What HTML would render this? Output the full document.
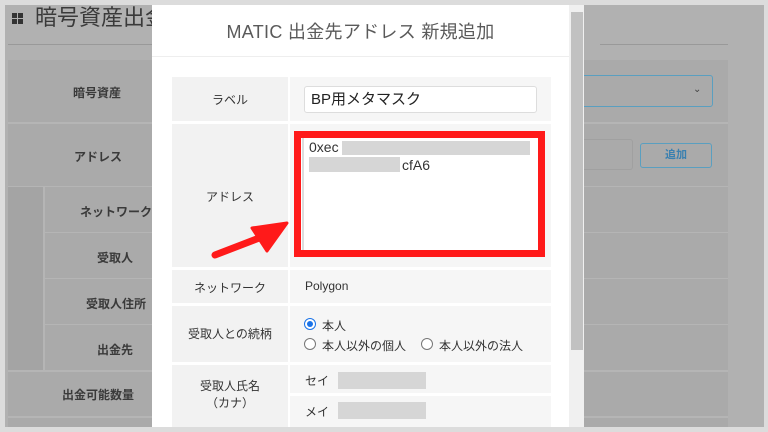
<!DOCTYPE html>
<html><head><meta charset="utf-8"><style>
*{margin:0;padding:0;box-sizing:border-box}
body{width:768px;height:432px;overflow:hidden;background:#dcdcdc;font-family:"Liberation Sans","Noto Sans CJK JP",sans-serif;position:relative}
.a{position:absolute}
.lt{font-size:12px;color:#333;text-align:center}
.g{position:absolute;width:5px;height:5px;background:#333}
</style></head><body>
<div class="a" style="left:5px;top:5px;width:759px;height:422px;background:#b1b1b1"></div>
<div class="g" style="left:12px;top:13px"></div><div class="g" style="left:18px;top:13px"></div>
<div class="g" style="left:12px;top:19px"></div><div class="g" style="left:18px;top:19px"></div>
<div class="a" style="left:35px;top:5px;font-size:22px;color:#3a3a3a;line-height:26px">暗号資産出金</div>
<div class="a" style="left:8px;top:44px;width:337px;height:1px;background:#999"></div>
<div class="a" style="left:600px;top:44px;width:128px;height:1px;background:#999"></div>
<div class="a" style="left:8px;top:60px;width:720px;height:367px;background:#aaaaaa"></div>
<div class="a" style="left:8px;top:122px;width:720px;height:2px;background:#b5b5b5"></div>
<div class="a" style="left:8px;top:186px;width:720px;height:1px;background:#b5b5b5"></div>
<div class="a" style="left:8px;top:370px;width:720px;height:2px;background:#b5b5b5"></div>
<div class="a" style="left:8px;top:416px;width:720px;height:2px;background:#b5b5b5"></div>
<div class="a" style="left:43px;top:187px;width:2px;height:183px;background:#b5b5b5"></div>
<div class="a" style="left:8px;top:187px;width:35px;height:183px;background:#a4a4a4"></div>
<div class="a" style="left:45px;top:232px;width:683px;height:1px;background:#b5b5b5"></div>
<div class="a" style="left:45px;top:278px;width:683px;height:1px;background:#b5b5b5"></div>
<div class="a" style="left:45px;top:324px;width:683px;height:1px;background:#b5b5b5"></div>
<div class="a lt" style="left:73px;top:84px;font-weight:bold;color:#3a3a3a">暗号資産</div>
<div class="a lt" style="left:74px;top:148px;font-weight:bold;color:#3a3a3a">アドレス</div>
<div class="a lt" style="left:80px;top:203px;font-weight:bold;color:#3a3a3a">ネットワーク</div>
<div class="a lt" style="left:97px;top:249px;font-weight:bold;color:#3a3a3a">受取人</div>
<div class="a lt" style="left:86px;top:295px;font-weight:bold;color:#3a3a3a">受取人住所</div>
<div class="a lt" style="left:97px;top:341px;font-weight:bold;color:#3a3a3a">出金先</div>
<div class="a lt" style="left:62px;top:386px;font-weight:bold;color:#3a3a3a">出金可能数量</div>
<div class="a" style="left:540px;top:75px;width:173px;height:32px;border:1.5px solid #5a9fc0;border-radius:3px"></div>
<div class="a" style="left:693px;top:84px;font-size:10px;color:#444">⌄</div>
<div class="a" style="left:560px;top:139px;width:73px;height:31px;border:1px solid #a0a0a0;border-radius:3px"></div>
<div class="a" style="left:640px;top:143px;width:72px;height:25px;border:1.5px solid #5a9fc0;border-radius:3px;font-size:11px;color:#3a80b0;text-align:center;line-height:22px;font-weight:bold">追加</div>
<!-- modal -->
<div class="a" style="left:152px;top:5px;width:417px;height:422px;background:#fff"></div>
<div class="a" style="left:569px;top:5px;width:15px;height:422px;background:#f0f0f0"></div>
<div class="a" style="left:571px;top:12px;width:12px;height:338px;background:#c1c1c1"></div>
<div class="a" style="left:152px;top:18px;width:417px;text-align:center;font-size:18px;color:#5a5a5a;letter-spacing:.3px">MATIC 出金先アドレス 新規追加</div>
<div class="a" style="left:152px;top:56px;width:417px;height:1px;background:#eee"></div>
<div class="a" style="left:172px;top:77px;width:379px;height:350px;background:#fff"></div>
<div class="a" style="left:172px;top:77px;width:116px;height:44px;background:#f2f2f2"></div>
<div class="a" style="left:290px;top:77px;width:261px;height:44px;background:#f6f6f6"></div>
<div class="a" style="left:172px;top:124px;width:116px;height:143px;background:#f2f2f2"></div>
<div class="a" style="left:290px;top:124px;width:261px;height:143px;background:#f6f6f6"></div>
<div class="a" style="left:172px;top:270px;width:116px;height:33px;background:#f2f2f2"></div>
<div class="a" style="left:290px;top:270px;width:261px;height:33px;background:#f6f6f6"></div>
<div class="a" style="left:172px;top:306px;width:116px;height:56px;background:#f2f2f2"></div>
<div class="a" style="left:290px;top:306px;width:261px;height:56px;background:#f6f6f6"></div>
<div class="a" style="left:172px;top:365px;width:116px;height:62px;background:#f2f2f2"></div>
<div class="a" style="left:290px;top:365px;width:261px;height:28px;background:#f6f6f6"></div>
<div class="a" style="left:290px;top:396px;width:261px;height:31px;background:#f6f6f6"></div>
<div class="a lt" style="left:172px;top:91px;width:116px">ラベル</div>
<div class="a lt" style="left:172px;top:188px;width:116px">アドレス</div>
<div class="a lt" style="left:172px;top:279px;width:116px">ネットワーク</div>
<div class="a lt" style="left:172px;top:325px;width:116px">受取人との続柄</div>
<div class="a lt" style="left:172px;top:378px;width:116px;line-height:17px">受取人氏名<br>（カナ）</div>
<div class="a" style="left:304px;top:86px;width:233px;height:27px;border:1px solid #ddd;border-radius:3px;background:#fff;font-size:15px;color:#222;padding-left:6px;line-height:25px">BP用メタマスク</div>
<div class="a" style="left:294px;top:131px;width:251px;height:126px;border:7px solid #ff1a1a;background:#fff"></div>
<div class="a" style="left:302px;top:138px;width:2px;height:112px;background:#ddd"></div>
<div class="a" style="left:342px;top:141px;width:188px;height:14px;background:#d6d6d6"></div>
<div class="a" style="left:309px;top:157px;width:91px;height:15px;background:#d6d6d6"></div>
<div class="a" style="left:309px;top:139px;font-size:14px;color:#333">0xec</div>
<div class="a" style="left:402px;top:157px;font-size:14px;color:#333">cfA6</div>
<svg class="a" style="left:205px;top:215px" width="90" height="50"><path d="M10 40 L62 20" stroke="#ff1a1a" stroke-width="7" stroke-linecap="round"/><path d="M47 13 L82 8 L62 36 Z" fill="#ff1a1a" stroke="#ff1a1a" stroke-width="3" stroke-linejoin="round"/></svg>
<div class="a" style="left:305px;top:279px;font-size:12px;color:#333">Polygon</div>
<div class="a" style="left:304px;top:318px;width:12px;height:12px;border-radius:50%;border:1px solid #1a73e8;background:#fff"><div style="margin:2px;width:6px;height:6px;border-radius:50%;background:#1a73e8"></div></div>
<div class="a" style="left:322px;top:317px;font-size:12px;color:#333">本人</div>
<div class="a" style="left:304px;top:338px;width:12px;height:12px;border-radius:50%;border:1px solid #777;background:#fff"></div>
<div class="a" style="left:322px;top:337px;font-size:12px;color:#333">本人以外の個人</div>
<div class="a" style="left:421px;top:338px;width:12px;height:12px;border-radius:50%;border:1px solid #777;background:#fff"></div>
<div class="a" style="left:439px;top:337px;font-size:12px;color:#333">本人以外の法人</div>
<div class="a" style="left:305px;top:372px;font-size:12px;color:#333">セイ</div>
<div class="a" style="left:338px;top:372px;width:88px;height:17px;background:#d6d6d6"></div>
<div class="a" style="left:305px;top:403px;font-size:12px;color:#333">メイ</div>
<div class="a" style="left:338px;top:402px;width:88px;height:17px;background:#d6d6d6"></div>
</body></html>
